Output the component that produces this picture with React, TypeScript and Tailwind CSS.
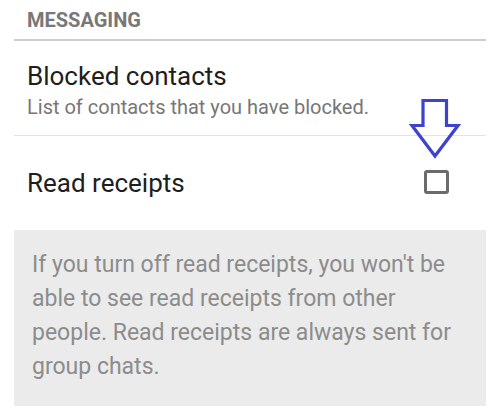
import React from "react";

export default function App() {
  return (
    <div className="relative w-[500px] h-[414px] bg-white overflow-hidden" style={{ fontFamily: "Roboto, 'Noto Sans', sans-serif" }}>
      <div className="px-[14px]">
        <div className="pt-[8px] pb-[7px] pl-[13px] border-b-2 border-[#cdcdcd]">
          <div className="text-[20px] leading-[24px] font-bold text-[#787878]">MESSAGING</div>
        </div>
        <div className="pt-[19.6px] pb-[16.5px] pl-[13px] border-b border-[#e3e3e3]">
          <div className="text-[26px] leading-[30px] text-[#1e1e1e]">Blocked contacts</div>
          <div className="mt-[4px] text-[20px] leading-[24px] text-[#777777]">List of contacts that you have blocked.</div>
        </div>
        <div className="h-[94px] flex items-center justify-between pl-[13px] pr-[37px]">
          <div className="text-[26px] leading-[30px] text-[#1e1e1e]">Read receipts</div>
          <div className="w-[25px] h-[24px] border-[3px] border-[#6b6b6b] rounded-[3px] mt-[-2px]" />
        </div>
        <div className="bg-[#ebebeb] pt-[18px] pb-[22px] pl-[18px] pr-[20px] text-[23px] leading-[34px] text-[#8c8c8c]">
          If you turn off read receipts, you won't be able to see read receipts from other people. Read receipts are always sent for group chats.
        </div>
      </div>
      <svg className="absolute left-0 top-0" width="500" height="414" viewBox="0 0 500 414">
        <polygon
          points="423,100.5 446.5,100.5 446.5,125.5 458,125.5 435,156 412,125.5 423,125.5"
          fill="none"
          stroke="#3d44c9"
          strokeWidth="3.2"
          strokeLinejoin="miter"
        />
      </svg>
    </div>
  );
}
